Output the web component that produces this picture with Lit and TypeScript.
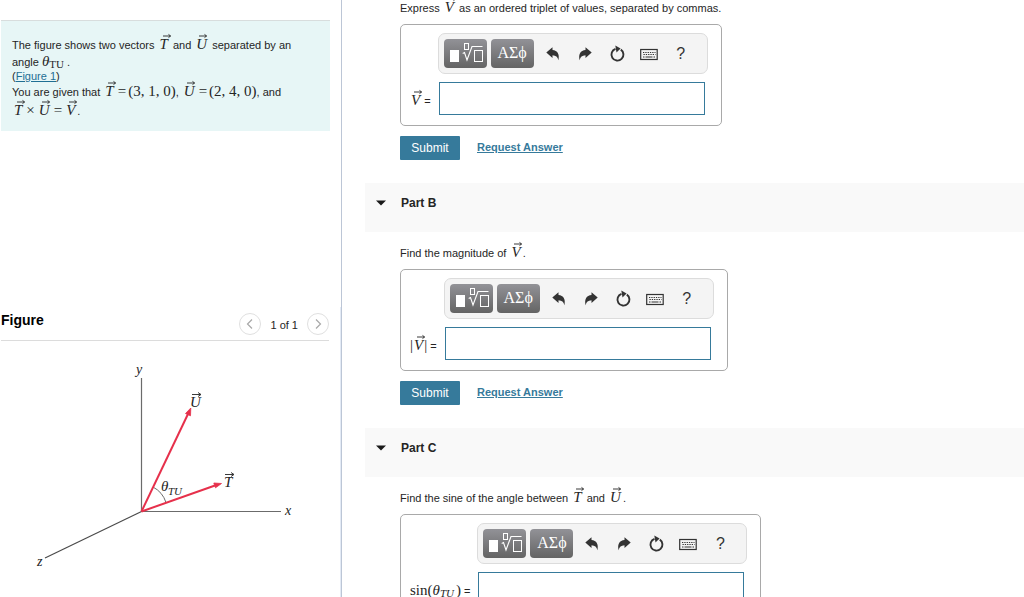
import { LitElement, html, css, svg, nothing } from "lit";
import type { TemplateResult } from "lit";
import { customElement, property } from "lit/decorators.js";

@customElement("math-vec")
class MathVec extends LitElement {
  static styles = css`
    :host {
      display: inline-block;
      position: relative;
      margin: 0 1px;
      font: italic 15px/14px "Liberation Serif", serif;
    }
    .arrow {
      position: absolute;
      left: 3px;
      top: -3px;
      width: 8px;
      height: 4px;
      overflow: visible;
    }
  `;
  @property() name = "";
  render() {
    return html`${this.name}<svg class="arrow" viewBox="0 0 8 4" aria-hidden="true">
        <path d="M0 2H7.5M5.5 0.4L7.6 2L5.5 3.6" fill="none" stroke="currentColor" stroke-width="0.9" />
      </svg>`;
  }
}

@customElement("answer-box")
class AnswerBox extends LitElement {
  static styles = css`
    :host {
      display: block;
      font: 11px/16px "Liberation Sans", Arial, sans-serif;
      color: #252525;
    }
    * {
      box-sizing: border-box;
    }
    .frame {
      display: inline-grid;
      grid-template-columns: auto auto;
      row-gap: 8px;
      padding: 8px 13px 10px 9px;
      border: 1px solid #a9a9a9;
      border-radius: 5px;
      vertical-align: top;
    }
    .toolbar {
      grid-column: 2;
      display: flex;
      align-items: center;
      height: 41px;
      padding: 0 10px 0 5px;
      border: 1px solid #dcdcdc;
      border-radius: 7px;
      background: #f4f4f4;
    }
    button {
      font: inherit;
      color: inherit;
      padding: 0;
      border: 0;
      background: none;
      cursor: pointer;
    }
    .pad {
      display: flex;
      align-items: center;
      justify-content: center;
      width: 43px;
      height: 29px;
      margin-right: 4px;
      border-radius: 4px;
      background: linear-gradient(#929297, #646464);
      color: #fff;
      font: 16px/20px "Liberation Serif", "DejaVu Serif", serif;
    }
    .greek {
      margin-right: 3px;
      padding-bottom: 2px;
    }
    .tool {
      display: flex;
      align-items: center;
      justify-content: center;
      width: 32px;
      height: 29px;
      font-size: 16px;
      color: #333;
    }
    label {
      align-self: center;
      padding: 4px 7px 0 0;
      white-space: nowrap;
    }
    .m {
      font-family: "Liberation Serif", serif;
      font-size: 15px;
    }
    .it {
      font-style: italic;
    }
    .sub {
      font-size: 11px;
      line-height: 0;
      vertical-align: -2px;
      font-style: italic;
      padding-right: 2px;
    }
    .entry {
      height: 33px;
      margin: 0 3px 0 1px;
      padding: 0 6px;
      min-width: 0;
      border: 1px solid #367a9b;
      background: #fff;
      font: 14px "Liberation Sans", Arial, sans-serif;
      outline: none;
    }
    .actions {
      display: flex;
      align-items: center;
      gap: 17px;
      margin-top: 10px;
    }
    .submit {
      width: 60px;
      height: 24px;
      background: #367a9b;
      color: #fff;
      font-size: 12px;
      border-radius: 1px;
    }
    a {
      color: #367a9b;
      font-weight: bold;
      line-height: 14px;
      padding-bottom: 2px;
    }
  `;
  @property({ attribute: false }) label: TemplateResult | typeof nothing = nothing;

  render() {
    return html`
      <div class="frame">
        <div class="toolbar" role="toolbar" aria-label="Equation tools">
          <button class="pad" aria-label="Templates">
            <svg width="43" height="29" viewBox="0 0 43 29" fill="none" stroke="#fff">
              <rect x="6" y="11" width="9" height="12" fill="#fff" stroke="none" />
              <rect x="20.5" y="4.5" width="4" height="6" />
              <path d="M18.700 14.500L20.500 13.500L23 21L28 7.500H38.500" stroke-width="1.100" />
              <rect x="30.500" y="11.500" width="8" height="11" />
            </svg>
          </button>
          <button class="pad greek" aria-label="Greek symbols">ΑΣϕ</button>
          <button class="tool" aria-label="Undo">
            <svg width="14" height="14" viewBox="0 0 14 14" fill="currentColor">
              <path d="M0.300 5.500L6.500 0.300V3C11.500 3.400 13.800 7 12.400 13.300C11.600 10 10 8.500 6.500 8.300V11Z" />
            </svg>
          </button>
          <button class="tool" aria-label="Redo">
            <svg width="14" height="14" viewBox="0 0 14 14" fill="currentColor">
              <path d="M13.700 5.500L7.500 0.300V3C2.500 3.400 0.200 7 1.600 13.300C2.400 10 4 8.500 7.500 8.300V11Z" />
            </svg>
          </button>
          <button class="tool" aria-label="Reset">
            <svg width="16" height="18" viewBox="0 0 16 18">
              <path d="M11.800 4.600A6 6 0 1 1 6.500 3.900" fill="none" stroke="currentColor" stroke-width="1.900" />
              <path d="M6.300 0.600L11.600 3.600L7.500 7.400Z" fill="currentColor" />
            </svg>
          </button>
          <button class="tool" aria-label="Keyboard shortcuts">
            <svg width="18" height="14" viewBox="0 0 18 14" fill="none" stroke="currentColor">
              <rect x="0.700" y="2.500" width="16.500" height="10" stroke-width="1.200" />
              <path d="M3 5.500H15.500M3.500 7.500H15.500" stroke-dasharray="1.300 1" stroke-width="1.200" />
              <path d="M3 10H4.500M5.500 10H12.500M13.500 10H15" stroke-width="1.200" />
            </svg>
          </button>
          <button class="tool" aria-label="Help">?</button>
        </div>
        <label for="entry">${this.label}</label>
        <input id="entry" class="entry" type="text" autocomplete="off" />
      </div>
      <div class="actions">
        <button class="submit">Submit</button>
        <a href="#">Request Answer</a>
      </div>
    `;
  }
}

const vec = (name: string) => html`<math-vec name=${name}></math-vec>`;

@customElement("app-root")
class AppRoot extends LitElement {
  static styles = css`
    :host {
      display: flex;
      height: 100vh;
      overflow: hidden;
      background: #fff;
      color: #252525;
      font: 11px/14px "Liberation Sans", Arial, sans-serif;
    }
    * {
      box-sizing: border-box;
    }
    h2,
    p {
      margin: 0;
    }
    p math-vec {
      margin: 0 2px;
    }
    .side {
      flex: 0 0 342px;
      display: flex;
      flex-direction: column;
      border-right: 1px solid #bcc6d6;
    }
    .problem {
      flex: 1;
      padding: 20px 11px 0 1px;
    }
    .intro {
      padding: 15px 10px 10px 11px;
      border-top: 1px solid #d8dddd;
      background: #e7f6f6;
    }
    .intro p {
      line-height: 14px;
    }
    .intro .tall {
      line-height: 19px;
    }
    .m {
      font-family: "Liberation Serif", serif;
      font-size: 15px;
      line-height: 0;
    }
    .eq {
      margin: 0 2px;
    }
    .th {
      font-style: italic;
    }
    .sub {
      font-size: 11px;
      vertical-align: -2px;
    }
    a {
      color: #1f6f94;
    }
    .figure {
      border-right: 1px solid #e3eaf5;
    }
    .figure-head {
      display: flex;
      align-items: center;
      height: 34px;
      margin: 0 11px 0 1px;
      border-bottom: 1px solid #dcdcdc;
    }
    .figure-head h2 {
      flex: 1;
      padding-bottom: 7px;
      color: #000;
      font-size: 14px;
      line-height: 16px;
    }
    .nav {
      width: 22px;
      height: 22px;
      padding: 0;
      display: grid;
      place-items: center;
      border: 1px solid #e0e0e0;
      border-radius: 50%;
      background: #fff;
    }
    .count {
      padding: 2px 9px 0;
    }
    .plot {
      display: block;
      width: 330px;
      height: 256px;
      font-family: "Liberation Serif", serif;
      font-style: italic;
    }
    .main {
      flex: 1;
      min-width: 0;
      padding-left: 23px;
      overflow-y: auto;
      scrollbar-width: none;
    }
    .part {
      margin-bottom: 23px;
    }
    .part-head {
      height: 49px;
      background: #f9f9f9;
    }
    .toggle {
      display: flex;
      align-items: center;
      gap: 15px;
      padding: 12px 11px 0;
      border: 0;
      background: none;
      color: #252525;
      font: bold 12px/16px "Liberation Sans", Arial, sans-serif;
    }
    .body {
      padding-left: 35px;
    }
    .prompt {
      height: 24px;
      line-height: 16px;
    }
    .part-head + .body {
      padding-top: 13px;
    }
  `;

  private part(title: string, prompt: TemplateResult, label: TemplateResult) {
    return html`
      <section class="part">
        ${title
          ? html`<div class="part-head">
              <button class="toggle" aria-expanded="true">
                <svg width="10" height="6" viewBox="0 0 10 6" aria-hidden="true">
                  <path d="M0 0.500H10L5 5.500Z" fill="#1a1a1a" />
                </svg>
                ${title}
              </button>
            </div>`
          : nothing}
        <div class="body">
          <p class="prompt">${prompt}</p>
          <answer-box .label=${label}></answer-box>
        </div>
      </section>
    `;
  }

  private plot() {
    return svg`
      <g fill="none" stroke="#6b6b6b" stroke-width="1.200">
        <path d="M141.500 378V511.500H281" />
        <path d="M141.500 511.500L45 558" stroke="#4a4a4a" />
        <path d="M153 487A27 27 0 0 1 166 502.500" stroke-width="1" />
      </g>
      <g stroke="#e6304b" fill="#e6304b">
        <path d="M141.500 511.500L188 414" stroke-width="2" />
        <path d="M190.800 408L190.500 415.800L185.500 413.500Z" stroke-width="0.800" />
        <path d="M141.500 511.500L215 485.500" stroke-width="2" />
        <path d="M221.500 483.500L215.500 487.800L213.800 483Z" stroke-width="0.800" />
      </g>
      <g fill="#252525" font-size="14">
        <text x="136" y="374">y</text>
        <text x="285" y="515">x</text>
        <text x="37" y="566">z</text>
        <text x="190" y="407" font-size="15">U</text>
        <text x="224" y="487" font-size="15">T</text>
        <text x="161" y="491" font-size="15">θ</text>
        <text x="168" y="495" font-size="11">TU</text>
      </g>
      <path d="M192 394.500H200.500M198 392.500L201 394.500L198 396.500M225 474.500H233.500M231 472.500L234 474.500L231 476.500"
        fill="none" stroke="#252525" stroke-width="0.900" />
    `;
  }

  render() {
    return html`
      <aside class="side">
        <div class="problem">
          <div class="intro">
            <p class="tall">The figure shows two vectors ${vec("T")} and ${vec("U")} separated by an</p>
            <p>angle <span class="m th">θ</span><span class="m sub">TU</span> .</p>
            <p>(<a href="#figure">Figure 1</a>)</p>
            <p class="tall">
              You are given that ${vec("T")}<span class="m eq">=</span><span class="m">(3, 1, 0)</span>,
              ${vec("U")}<span class="m eq">=</span><span class="m">(2, 4, 0)</span>, and
            </p>
            <p class="tall">${vec("T")}<span class="m eq">×</span>${vec("U")}<span class="m eq">=</span>${vec("V")}.</p>
          </div>
        </div>
        <section class="figure" id="figure">
          <div class="figure-head">
            <h2>Figure</h2>
            <button class="nav" aria-label="Previous figure">
              <svg width="8" height="10" viewBox="0 0 8 10" fill="none" stroke="#a8a8a8">
                <path d="M6 0.500L1.500 5L6 9.500" stroke-width="1.200" />
              </svg>
            </button>
            <span class="count">1 of 1</span>
            <button class="nav" aria-label="Next figure">
              <svg width="8" height="10" viewBox="0 0 8 10" fill="none" stroke="#a8a8a8">
                <path d="M2 0.500L6.500 5L2 9.500" stroke-width="1.200" />
              </svg>
            </button>
          </div>
          <svg class="plot" viewBox="0 341 330 256" role="img" aria-label="Vectors T and U">${this.plot()}</svg>
        </section>
      </aside>
      <main class="main">
        ${this.part(
          "",
          html`Express ${vec("V")} as an ordered triplet of values, separated by commas.`,
          html`${vec("V")} =`
        )}
        ${this.part(
          "Part B",
          html`Find the magnitude of ${vec("V")}.`,
          html`<span class="m">|</span>${vec("V")}<span class="m">|</span> =`
        )}
        ${this.part(
          "Part C",
          html`Find the sine of the angle between ${vec("T")} and ${vec("U")}.`,
          html`<span class="m">sin(<span class="it">θ</span><span class="sub">TU</span>)</span> =`
        )}
      </main>
    `;
  }
}
